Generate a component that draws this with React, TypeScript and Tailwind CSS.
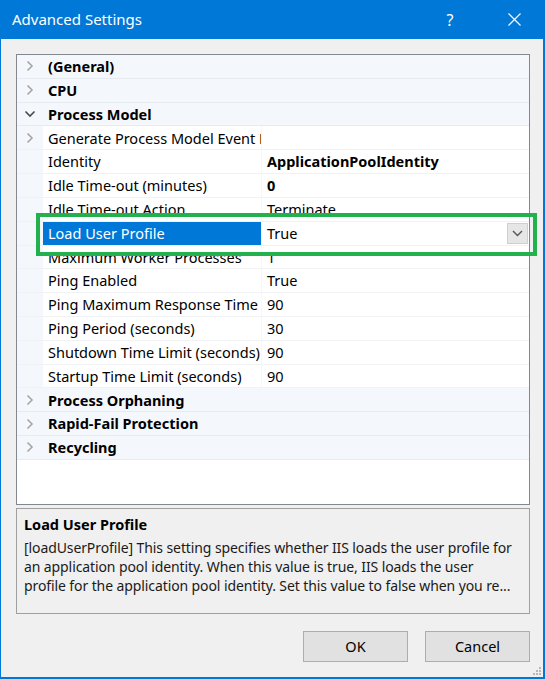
import type { ReactNode } from "react";

type Row =
  | { kind: "category"; label: string; open?: boolean }
  | { kind: "prop"; label: string; value: string; bold?: boolean; expandable?: boolean; selected?: boolean };

const rows: Row[] = [
  { kind: "category", label: "(General)" },
  { kind: "category", label: "CPU" },
  { kind: "category", label: "Process Model", open: true },
  { kind: "prop", label: "Generate Process Model Event Log Entry", value: "", expandable: true },
  { kind: "prop", label: "Identity", value: "ApplicationPoolIdentity", bold: true },
  { kind: "prop", label: "Idle Time-out (minutes)", value: "0", bold: true },
  { kind: "prop", label: "Idle Time-out Action", value: "Terminate" },
  { kind: "prop", label: "Load User Profile", value: "True", selected: true },
  { kind: "prop", label: "Maximum Worker Processes", value: "1" },
  { kind: "prop", label: "Ping Enabled", value: "True" },
  { kind: "prop", label: "Ping Maximum Response Time (seconds)", value: "90" },
  { kind: "prop", label: "Ping Period (seconds)", value: "30" },
  { kind: "prop", label: "Shutdown Time Limit (seconds)", value: "90" },
  { kind: "prop", label: "Startup Time Limit (seconds)", value: "90" },
  { kind: "category", label: "Process Orphaning" },
  { kind: "category", label: "Rapid-Fail Protection" },
  { kind: "category", label: "Recycling" },
];

const description = [
  "[loadUserProfile] This setting specifies whether IIS loads the user profile for",
  "an application pool identity. When this value is true, IIS loads the user",
  "profile for the application pool identity. Set this value to false when you re...",
];

function Chevron({ open }: { open?: boolean }) {
  if (open) {
    return (
      <svg width="12" height="8" viewBox="0 0 12 8" className="block">
        <polyline points="1.5,1.5 6,6 10.5,1.5" fill="none" stroke="#4a4a4a" strokeWidth="1.6" />
      </svg>
    );
  }
  return (
    <svg width="8" height="12" viewBox="0 0 8 12" className="block">
      <polyline points="1.5,1.5 6,6 1.5,10.5" fill="none" stroke="#a6a6a6" strokeWidth="1.6" />
    </svg>
  );
}

function Gutter({ children }: { children?: ReactNode }) {
  return <div className="flex w-[26px] shrink-0 items-center justify-center">{children}</div>;
}

function GridRow({ row }: { row: Row }) {
  if (row.kind === "category") {
    return (
      <div className="flex h-[23.82px] items-center border-b border-[#e6eaf1] bg-[#f4f7fb]">
        <Gutter>
          <Chevron open={row.open} />
        </Gutter>
        <span className="pl-[5px] font-bold text-black">{row.label}</span>
      </div>
    );
  }

  return (
    <div className="flex h-[23.82px] border-b border-[#f0f2f6] bg-[#f4f7fb]">
      <Gutter>{row.expandable ? <Chevron /> : null}</Gutter>
      <div
        className={
          row.selected
            ? "flex w-[218px] shrink-0 items-center overflow-hidden whitespace-nowrap bg-[#0078d7] pl-[5px] text-white"
            : "flex w-[218px] shrink-0 items-center overflow-hidden whitespace-nowrap bg-white pl-[5px] text-black"
        }
      >
        {row.label}
      </div>
      <div className="ml-px flex min-w-0 flex-1 items-center bg-white pl-[5px]">
        <span className={row.bold ? "flex-1 font-bold text-black" : "flex-1 text-black"}>{row.value}</span>
        {row.selected ? (
          <div className="mr-px flex h-[21px] w-[21px] items-center justify-center border border-[#cfcfcf] bg-[#e6e6e6]">
            <svg width="11" height="7" viewBox="0 0 11 7">
              <polyline points="1,1 5.5,5.5 10,1" fill="none" stroke="#555" strokeWidth="1.4" />
            </svg>
          </div>
        ) : null}
      </div>
    </div>
  );
}

export default function App() {
  return (
    <div
      className="relative flex h-[679px] w-[545px] flex-col bg-[#0078d7] pb-[2px] pl-px pr-[2px] text-[14.5px] leading-none"
      style={{ fontFamily: '"Noto Sans", "Segoe UI", sans-serif' }}
    >
      <div className="flex h-[39px] shrink-0 items-center text-white">
        <span className="pl-[11px] text-[15px]">Advanced Settings</span>
        <span className="ml-auto w-[20px] text-center text-[16px]">?</span>
        <div className="ml-[47px] mr-[22px] flex h-[14px] w-[14px] items-center justify-center">
          <svg width="13" height="13" viewBox="0 0 13 13">
            <path d="M0.5 0.5 L12.5 12.5 M12.5 0.5 L0.5 12.5" stroke="#fff" strokeWidth="1.2" />
          </svg>
        </div>
      </div>

      <div className="relative flex flex-1 flex-col bg-[#f0f0f0] pl-[15px] pr-[13px] pt-[15px]">
        <div className="h-[451px] border border-[#828790] bg-white">
          {rows.map((row) => (
            <GridRow key={row.label} row={row} />
          ))}
        </div>

        <div className="mt-[3px] h-[106px] border border-[#a0a0a0] bg-[#f0f0f0] px-[7px] pt-[8px] text-[#1a1a1a]">
          <p className="font-bold text-black">Load User Profile</p>
          <div className="mt-[6px] text-[14px] leading-[19px] tracking-[-0.1px]">
            {description.map((line) => (
              <p key={line} className="whitespace-nowrap">
                {line}
              </p>
            ))}
          </div>
        </div>

        <div className="mt-[17px] flex justify-end gap-[17px]">
          <button className="h-[31px] w-[105px] border border-[#adadad] bg-[#e1e1e1] text-black">OK</button>
          <button className="h-[31px] w-[105px] border border-[#adadad] bg-[#e1e1e1] text-black">Cancel</button>
        </div>

        <svg width="10" height="10" viewBox="0 0 10 10" className="absolute bottom-[1px] right-[1px]">
          {[
            [8, 2],
            [8, 5],
            [5, 5],
            [8, 8],
            [5, 8],
            [2, 8],
          ].map(([x, y]) => (
            <rect key={`${x}-${y}`} x={x - 1} y={y - 1} width="2" height="2" fill="#b8b8b8" />
          ))}
        </svg>
      </div>

      <div className="pointer-events-none absolute left-[36px] top-[213px] h-[43px] w-[501px] border-4 border-[#22b14c]" />
    </div>
  );
}
